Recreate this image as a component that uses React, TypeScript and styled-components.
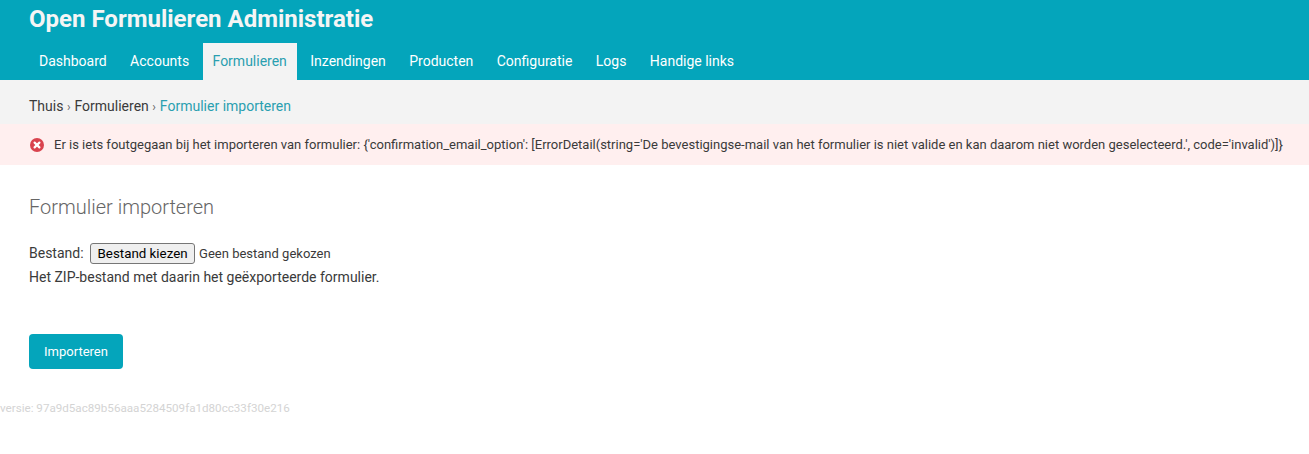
import React from 'react';
import styled, { createGlobalStyle } from 'styled-components';

const GlobalStyle = createGlobalStyle`
  html, body {
    margin: 0;
    padding: 0;
    background: #fff;
    color: #3a3a3a;
    font-family: Roboto, "Liberation Sans", sans-serif;
    font-size: 14px;
  }
`;

const Header = styled.header`
  height: 80px;
  background: #04a5bb;
  box-sizing: border-box;
  padding: 0 29px;
  display: flex;
  flex-direction: column;
`;

const Branding = styled.h1`
  margin: 0;
  height: 43px;
  line-height: 39px;
  font-size: 24px;
  font-weight: 700;
  color: #f5f5f5;
`;

const Nav = styled.nav`
  display: flex;
`;

const NavItem = styled.a<{ $active?: boolean }>`
  height: 37px;
  line-height: 37px;
  padding: 0 10px;
  margin-right: 3.4px;
  font-size: 14px;
  color: ${({ $active }) => ($active ? '#2a9fb0' : '#fff')};
  background: ${({ $active }) => ($active ? '#f3f3f3' : 'transparent')};
`;

const Breadcrumbs = styled.div`
  height: 44px;
  line-height: 53px;
  box-sizing: border-box;
  padding: 0 29px;
  background: #f3f3f3;
  font-size: 14px;
  color: #3a3a3a;
`;

const Sep = styled.span`
  color: #666;
  font-size: 12px;
  margin-right: 0.5px;
`;

const Current = styled.span`
  color: #2a9fb0;
`;

const ErrorBar = styled.div`
  height: 41px;
  box-sizing: border-box;
  padding: 0 0 0 30px;
  background: #ffefef;
  display: flex;
  align-items: center;
  gap: 10px;
  font-size: 13px;
  color: #3a3a3a;
  white-space: nowrap;
`;

const Content = styled.main`
  padding: 30px 29px 0;
`;

const Title = styled.h2`
  margin: 0;
  font-size: 20px;
  line-height: 24px;
  font-weight: 300;
  color: #666;
`;

const FileRow = styled.div`
  margin-top: 24px;
  display: flex;
  align-items: center;
  height: 21px;
`;

const FileLabel = styled.label`
  font-size: 14px;
  margin: 0 6px 2px 0;
`;

const FileButton = styled.button`
  height: 21px;
  width: 105px;
  padding: 0 0 0 1px;
  box-sizing: border-box;
  border: 1px solid #767676;
  border-radius: 3px;
  background: #efefef;
  color: #000;
  font-family: Roboto, sans-serif;
  font-size: 13.33px;
`;

const FileName = styled.span`
  margin-left: 4.5px;
  font-size: 13px;
`;

const Help = styled.p`
  margin: 4px 0 0;
  font-size: 14px;
  line-height: 18px;
`;

const Submit = styled.button`
  display: block;
  margin-top: 48px;
  width: 94px;
  height: 35px;
  padding: 0;
  border: 0;
  border-radius: 4px;
  background: #04a5bb;
  color: #fff;
  font-family: Roboto, sans-serif;
  font-size: 13px;
`;

const Version = styled.div`
  margin-top: 32px;
  font-size: 11.64px;
  line-height: 14px;
  color: #d4d4d4;
`;

const ErrorIcon = () => (
  <svg width="14" height="14" viewBox="0 0 14 14" style={{ flex: 'none' }}>
    <circle cx="7" cy="7" r="7" fill="#d9434e" />
    <path d="M4.6 4.6l4.8 4.8M9.4 4.6l-4.8 4.8" stroke="#fff" strokeWidth="2.2" strokeLinecap="round" />
  </svg>
);

const navItems = ['Dashboard', 'Accounts', 'Formulieren', 'Inzendingen', 'Producten', 'Configuratie', 'Logs', 'Handige links'];

export default function App() {
  return (
    <>
      <GlobalStyle />
      <Header>
        <Branding>Open Formulieren Administratie</Branding>
        <Nav>
          {navItems.map((item) => (
            <NavItem key={item} $active={item === 'Formulieren'}>{item}</NavItem>
          ))}
        </Nav>
      </Header>
      <Breadcrumbs>
        Thuis <Sep>›</Sep> Formulieren <Sep>›</Sep> <Current>Formulier importeren</Current>
      </Breadcrumbs>
      <ErrorBar>
        <ErrorIcon />
        <span>
          Er is iets foutgegaan bij het importeren van formulier: {"{'confirmation_email_option': [ErrorDetail(string='De bevestigingse-mail van het formulier is niet valide en kan daarom niet worden geselecteerd.', code='invalid')]}"}
        </span>
      </ErrorBar>
      <Content>
        <Title>Formulier importeren</Title>
        <FileRow>
          <FileLabel>Bestand:</FileLabel>
          <FileButton type="button">Bestand kiezen</FileButton>
          <FileName>Geen bestand gekozen</FileName>
        </FileRow>
        <Help>Het ZIP-bestand met daarin het geëxporteerde formulier.</Help>
        <Submit type="button">Importeren</Submit>
      </Content>
      <Version>versie: 97a9d5ac89b56aaa5284509fa1d80cc33f30e216</Version>
    </>
  );
}
